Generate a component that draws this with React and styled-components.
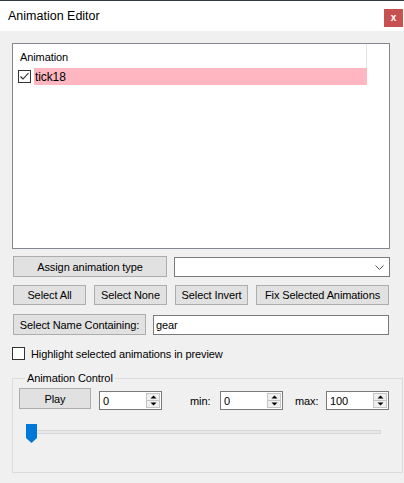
import React from 'react'
import styled, { createGlobalStyle } from 'styled-components'

const GlobalStyle = createGlobalStyle`
  html, body {
    margin: 0;
    padding: 0;
    background: #f0f0f0;
  }

  body {
    font-family: "Liberation Sans", Arial, sans-serif;
    font-size: 11px;
    letter-spacing: -0.1px;
    color: #000;
  }

  * {
    box-sizing: border-box;
  }
`

const CheckBox = ({ checked }) => (
  <CheckSvg width="13" height="13" viewBox="0 0 13 13">
    <rect x="0.5" y="0.5" width="12" height="12" fill="#fff" stroke="#333" />
    {checked && (
      <polyline
        points="2.5,6.5 5,9 10.5,3"
        fill="none"
        stroke="#222"
        strokeWidth="1.1"
      />
    )}
  </CheckSvg>
)

const Spinner = () => (
  <SpinBox>
    <SpinHalf>
      <svg width="7" height="4" viewBox="0 0 7 4">
        <polygon points="0.5,3.5 3.5,0.5 6.5,3.5" fill="#000" />
      </svg>
    </SpinHalf>
    <SpinHalf>
      <svg width="7" height="4" viewBox="0 0 7 4">
        <polygon points="0.5,0.5 6.5,0.5 3.5,3.5" fill="#000" />
      </svg>
    </SpinHalf>
  </SpinBox>
)

const NumberBox = ({ value, gap }) => (
  <Numeric $gap={gap}>
    <NumText>{value}</NumText>
    <Spinner />
  </Numeric>
)

const App = () => {
  return (
    <>
      <GlobalStyle />
      <Window>
        <TitleBar>
          <Title>Animation Editor</Title>
          <CloseButton>x</CloseButton>
        </TitleBar>

        <Content>
          <ListView>
            <ListHeader>
              <HeaderCell>Animation</HeaderCell>
            </ListHeader>
            <ListRow>
              <CheckBox checked />
              <RowLabel>tick18</RowLabel>
            </ListRow>
          </ListView>

          <Row $top={7}>
            <Button $width={154} $height={21}>Assign animation type</Button>
            <Combo>
              <svg width="9" height="5" viewBox="0 0 9 5">
                <polyline points="0.5,0.5 4.5,4.5 8.5,0.5" fill="none" stroke="#555" />
              </svg>
            </Combo>
          </Row>

          <Row $top={8} $gap={8}>
            <Button $width={73} $height={20}>Select All</Button>
            <Button $width={73} $height={20}>Select None</Button>
            <Button $width={73} $height={20}>Select Invert</Button>
            <Button $width={133} $height={20}>Fix Selected Animations</Button>
          </Row>

          <Row $top={9}>
            <Button $width={133} $height={21}>Select Name Containing:</Button>
            <TextInput>gear</TextInput>
          </Row>

          <CheckRow>
            <CheckBox />
            <span>Highlight selected animations in preview</span>
          </CheckRow>

          <Group>
            <Legend>Animation Control</Legend>
            <ControlRow>
              <Button $width={72} $height={21}>Play</Button>
              <NumberBox value="0" gap={8} />
              <FieldLabel $width={58} $indent={28}>min:</FieldLabel>
              <NumberBox value="0" />
              <FieldLabel $width={43} $indent={12}>max:</FieldLabel>
              <NumberBox value="100" />
            </ControlRow>

            <Slider>
              <Track />
              <Thumb width="11" height="19" viewBox="0 0 11 19">
                <path d="M0 0 H11 V14 L5.5 19 L0 14 Z" fill="#0078d7" />
              </Thumb>
            </Slider>
          </Group>
        </Content>
      </Window>
    </>
  )
}

export default App

const Window = styled.div`
  width: 404px;
  height: 483px;
  border-top: 1px solid #2e3a46;
  background: #f0f0f0;
  display: flex;
  flex-direction: column;
  overflow: hidden;
`

const TitleBar = styled.div`
  height: 30px;
  background: #ffffff;
  display: flex;
  align-items: flex-start;
  justify-content: space-between;
  padding: 0 1px 0 8px;
  flex-shrink: 0;
`

const Title = styled.span`
  font-size: 12.5px;
  letter-spacing: 0;
  line-height: 30px;
  color: #000;
`

const CloseButton = styled.div`
  width: 19px;
  height: 18px;
  margin-top: 8px;
  background: #c75050;
  color: #ffffff;
  font-size: 10px;
  font-weight: 700;
  display: flex;
  align-items: center;
  justify-content: center;
  padding-bottom: 2px;
`

const Content = styled.div`
  padding: 12px 14px 0 12px;
  display: flex;
  flex-direction: column;
`

const ListView = styled.div`
  height: 206px;
  background: #ffffff;
  border: 1px solid #828790;
`

const ListHeader = styled.div`
  height: 24px;
  display: flex;
`

const HeaderCell = styled.div`
  width: 354px;
  border-right: 1px solid #e5e5e5;
  padding-left: 7px;
  display: flex;
  align-items: center;
  padding-top: 2px;
`

const ListRow = styled.div`
  height: 17px;
  display: flex;
  align-items: center;
  padding-left: 5px;
`

const CheckSvg = styled.svg`
  display: block;
  flex-shrink: 0;
`

const RowLabel = styled.div`
  width: 333px;
  height: 17px;
  margin-left: 3px;
  padding-left: 1px;
  background: #ffb6c1;
  display: flex;
  align-items: center;
  font-size: 12px;
`

const Row = styled.div`
  display: flex;
  align-items: flex-start;
  gap: ${(p) => p.$gap || 7}px;
  margin-top: ${(p) => p.$top}px;
  padding-left: 1px;
`

const Button = styled.div`
  width: ${(p) => p.$width}px;
  height: ${(p) => p.$height}px;
  background: #e1e1e1;
  border: 1px solid #adadad;
  display: flex;
  align-items: center;
  justify-content: center;
  white-space: nowrap;
  flex-shrink: 0;
`

const Combo = styled.div`
  width: 216px;
  height: 20px;
  margin-top: 1px;
  background: #ffffff;
  border: 1px solid #7a7a7a;
  display: flex;
  align-items: center;
  justify-content: flex-end;
  padding-right: 5px;
`

const TextInput = styled.div`
  width: 236px;
  height: 20px;
  margin-top: 1px;
  background: #ffffff;
  border: 1px solid #7a7a7a;
  padding-left: 2px;
  display: flex;
  align-items: center;
`

const CheckRow = styled.div`
  display: flex;
  align-items: center;
  gap: 6px;
  margin-top: 12px;
`

const Group = styled.fieldset`
  margin: 12px -13px 0 0;
  padding: 3px 0 29px 6px;
  border: 1px solid #dcdcdc;
  min-width: 0;
`

const Legend = styled.legend`
  margin-left: 6px;
  padding: 0 2px;
  font-size: 11px;
  line-height: 13px;
`

const ControlRow = styled.div`
  display: flex;
  align-items: flex-start;
`

const Numeric = styled.div`
  width: 63px;
  height: 19px;
  margin-top: 3px;
  margin-left: ${(p) => p.$gap || 0}px;
  background: #ffffff;
  border: 1px solid #7a7a7a;
  display: flex;
  align-items: stretch;
  padding: 1px;
  flex-shrink: 0;
`

const NumText = styled.div`
  flex: 1;
  padding-left: 2px;
  display: flex;
  align-items: center;
`

const SpinBox = styled.div`
  width: 14px;
  display: flex;
  flex-direction: column;
`

const SpinHalf = styled.div`
  flex: 1;
  background: #f0f0f0;
  border: 1px solid #c4c4c4;
  display: flex;
  align-items: center;
  justify-content: center;

  & + & {
    border-top: none;
  }
`

const FieldLabel = styled.div`
  width: ${(p) => p.$width}px;
  padding-left: ${(p) => p.$indent}px;
  height: 19px;
  margin-top: 3px;
  display: flex;
  align-items: center;
  flex-shrink: 0;
`

const Slider = styled.div`
  position: relative;
  height: 19px;
  margin: 14px 0 0 7px;
  padding-top: 6px;
`

const Track = styled.div`
  width: 355px;
  height: 4px;
  background: #e7eaea;
  border: 1px solid #d6d6d6;
`

const Thumb = styled.svg`
  position: absolute;
  left: 0;
  top: 0;
  display: block;
`
